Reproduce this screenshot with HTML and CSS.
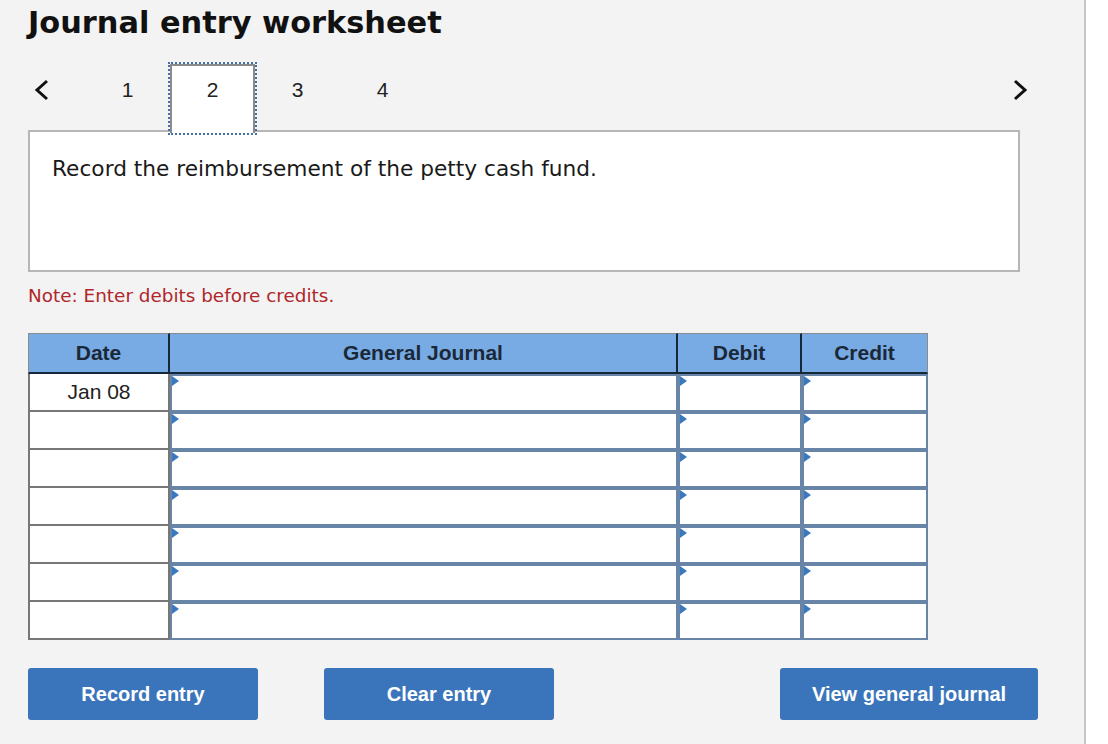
FILE: index.html
```html
<!DOCTYPE html>
<html>
<head>
<meta charset="utf-8">
<link rel="stylesheet" href="styles.css">
</head>
<body>
<div class="page">
  <h1 class="title">Journal entry worksheet</h1>
  <div class="nav">
    <div class="chev chev-left">
      <svg width="16" height="22" viewBox="0 0 16 22"><polyline points="13,2 3,11 13,20" fill="none" stroke="#111" stroke-width="3"/></svg>
    </div>
    <div class="tab">1</div>
    <div class="tab tab-active">2</div>
    <div class="tab">3</div>
    <div class="tab">4</div>
    <div class="chev chev-right">
      <svg width="16" height="22" viewBox="0 0 16 22"><polyline points="3,2 13,11 3,20" fill="none" stroke="#111" stroke-width="3"/></svg>
    </div>
  </div>
  <div class="instr">Record the reimbursement of the petty cash fund.</div>
  <div class="note">Note: Enter debits before credits.</div>
  <div class="journal">
    <div class="hcell">Date</div>
    <div class="hcell">General Journal</div>
    <div class="hcell">Debit</div>
    <div class="hcell hlast">Credit</div>

    <div class="dcell">Jan 08</div><div class="icell"></div><div class="icell"></div><div class="icell"></div>
    <div class="dcell"></div><div class="icell"></div><div class="icell"></div><div class="icell"></div>
    <div class="dcell"></div><div class="icell"></div><div class="icell"></div><div class="icell"></div>
    <div class="dcell"></div><div class="icell"></div><div class="icell"></div><div class="icell"></div>
    <div class="dcell"></div><div class="icell"></div><div class="icell"></div><div class="icell"></div>
    <div class="dcell"></div><div class="icell"></div><div class="icell"></div><div class="icell"></div>
    <div class="dcell"></div><div class="icell"></div><div class="icell"></div><div class="icell"></div>
  </div>
  <div class="buttons">
    <div class="btn">Record entry</div>
    <div class="btn">Clear entry</div>
    <div class="btn btn-wide">View general journal</div>
  </div>
</div>
</body>
</html>
```
FILE: styles.css
```css
html, body {
  margin: 0;
  padding: 0;
  background: #ffffff;
}
.page {
  width: 1086px;
  min-height: 744px;
  box-sizing: border-box;
  background: #f3f3f3;
  border-right: 2px solid #c6c6c6;
  padding-left: 28px;
  padding-top: 3px;
  font-family: "DejaVu Sans", Verdana, sans-serif;
}
.title {
  margin: 0;
  font-family: "DejaVu Sans", Verdana, sans-serif;
  font-weight: bold;
  font-size: 30.4px;
  line-height: 40px;
  color: #111;
}
.nav {
  display: flex;
  align-items: flex-start;
  width: 1004px;
  height: 68px;
  margin-top: 21px;
}
.chev {
  width: 57px;
  height: 68px;
  box-sizing: border-box;
  padding-top: 15px;
}
.chev-left {
  padding-left: 6px;
}
.chev-right {
  margin-left: auto;
  width: 20px;
  padding-left: 0;
}
.tab {
  position: relative;
  z-index: 1;
  width: 85px;
  height: 69px;
  box-sizing: border-box;
  border: 2px solid transparent;
  border-bottom: none;
  padding-top: 12px;
  text-align: center;
  font-family: "Liberation Sans", Arial, sans-serif;
  font-size: 21px;
  line-height: 24px;
  color: #222;
}
.tab-active {
  background: #ffffff;
  border-color: #8a8a8a;
  outline: 2px dotted #4470a8;
}
.instr {
  width: 992px;
  height: 142px;
  box-sizing: border-box;
  margin-top: -2px;
  background: #ffffff;
  border: 2px solid #b6b6b6;
  padding: 24px 0 0 22px;
  font-size: 21.7px;
  line-height: 26px;
  color: #1a1a1a;
}
.note {
  margin-top: 13px;
  font-size: 18.4px;
  line-height: 22px;
  color: #b0262a;
}
.journal {
  display: grid;
  grid-template-columns: 142px 508px 124px 126px;
  grid-template-rows: 41px repeat(7, 38px);
  margin-top: 26px;
  width: 900px;
}
.hcell {
  background: #78abe4;
  box-sizing: border-box;
  border-top: 1px solid #8c8c8c;
  border-right: 2px solid #17273a;
  border-bottom: 2px solid #17273a;
  display: flex;
  align-items: center;
  justify-content: center;
  font-family: "Liberation Sans", Arial, sans-serif;
  font-weight: bold;
  font-size: 21px;
  color: #1b2838;
}
.hcell:first-child {
  border-left: 1px solid #8c8c8c;
}
.hlast {
  border-right: 1px solid #8c8c8c;
}
.dcell {
  background: #ffffff;
  box-sizing: border-box;
  border-left: 2px solid #777;
  border-right: 2px solid #777;
  border-bottom: 2px solid #777;
  display: flex;
  align-items: center;
  justify-content: center;
  font-family: "Liberation Sans", Arial, sans-serif;
  font-size: 21px;
  color: #222;
}
.icell {
  position: relative;
  background: #ffffff;
  box-sizing: border-box;
  border: 2px solid #6884a6;
}
.icell::before {
  content: "";
  position: absolute;
  left: 0;
  top: 0;
  width: 0;
  height: 0;
  border-left: 7px solid #3a78c0;
  border-top: 5px solid transparent;
  border-bottom: 5px solid transparent;
}
.buttons {
  display: flex;
  gap: 66px;
  width: 1010px;
  margin-top: 28px;
}
.btn {
  width: 230px;
  height: 52px;
  box-sizing: border-box;
  background: #3a75bb;
  border-radius: 3px;
  display: flex;
  align-items: center;
  justify-content: center;
  font-family: "Liberation Sans", Arial, sans-serif;
  font-weight: bold;
  font-size: 20px;
  color: #ffffff;
}
.btn-wide {
  width: 258px;
  margin-left: auto;
}
```
